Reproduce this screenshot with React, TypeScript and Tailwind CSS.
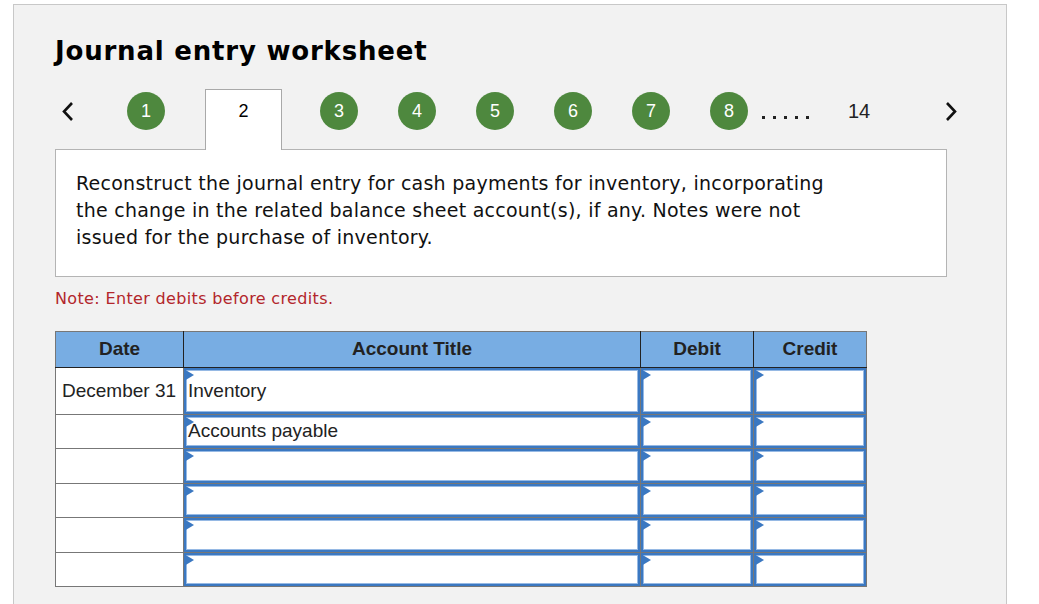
import type { ReactNode } from "react";

const steps = [3, 4, 5, 6, 7, 8];

function Circle({ n, className = "" }: { n: number; className?: string }) {
  return (
    <div
      className={`mt-[3px] flex h-[38px] w-[38px] shrink-0 items-center justify-center rounded-full bg-[#4e883e] text-[18px] leading-none text-white ${className}`}
      style={{ fontFamily: '"Liberation Sans", Arial, sans-serif' }}
    >
      {n}
    </div>
  );
}

function Chevron({ dir }: { dir: "left" | "right" }) {
  return (
    <svg width="13" height="21" viewBox="0 0 13 21" className="shrink-0">
      <path
        d={dir === "left" ? "M11 2 L3 10.5 L11 19" : "M2 2 L10 10.5 L2 19"}
        fill="none"
        stroke="#111"
        strokeWidth="2.6"
      />
    </svg>
  );
}

function InputCell({ children, tall }: { children?: ReactNode; tall?: boolean }) {
  return (
    <td className="border border-[#777] p-0 align-top">
      <div
        className={`relative flex border-2 border-[#3b78c1] bg-white shadow-[inset_0_0_0_1px_#96b9e4] ${
          tall ? "h-[46px] items-center" : "h-[33.4px] items-start pt-[3px]"
        }`}
      >
        <svg width="10" height="12" viewBox="0 0 10 12" className="absolute -left-[2px] -top-[1px]">
          <path d="M0 0 L10 6 L0 12 Z" fill="#3b78c1" />
        </svg>
        <span className="pl-[2px] text-[19px] leading-[22px] text-[#222]">{children}</span>
      </div>
    </td>
  );
}

const rows: { date: string; account: string; tall?: boolean }[] = [
  { date: "December 31", account: "Inventory", tall: true },
  { date: "", account: "Accounts payable" },
  { date: "", account: "" },
  { date: "", account: "" },
  { date: "", account: "" },
  { date: "", account: "" },
];

export default function App() {
  return (
    <div className="h-[604px] overflow-hidden bg-white pl-[13px] pt-[4px]">
      <div
        className="h-[640px] w-[994px] border border-[#c8c8c8] bg-[#f2f2f2] pl-[41px] pt-[29px]"
        style={{ fontFamily: '"DejaVu Sans", Verdana, sans-serif' }}
      >
        <h1 className="text-[26px] font-bold leading-[35px] tracking-[0.8px] text-black">Journal entry worksheet</h1>

        {/* step navigation */}
        <div className="mt-[20px] flex h-[60px] items-start">
          <div className="ml-[6px] mt-[12px]">
            <Chevron dir="left" />
          </div>
          <Circle n={1} className="ml-[53px]" />
          <div
            className="relative z-10 ml-[40px] flex h-[61px] w-[77px] shrink-0 justify-center border border-b-0 border-[#a9a9a9] bg-white pt-[11px] text-[18px] leading-[20px] text-black"
            style={{ fontFamily: '"Liberation Sans", Arial, sans-serif' }}
          >
            2
          </div>
          {steps.map((n, i) => (
            <Circle key={n} n={n} className={i === 0 ? "ml-[38px]" : "ml-[40px]"} />
          ))}
          <div className="ml-[14px] mt-[27px] flex gap-[8px]">
            {[0, 1, 2, 3, 4].map((d) => (
              <span key={d} className="h-[3px] w-[3px] bg-[#222]" />
            ))}
          </div>
          <div
            className="ml-[39px] mt-[11px] text-[20px] leading-[22px] text-[#222]"
            style={{ fontFamily: '"Liberation Sans", Arial, sans-serif' }}
          >
            14
          </div>
          <div className="ml-[75px] mt-[12px]">
            <Chevron dir="right" />
          </div>
        </div>

        {/* question */}
        <div className="w-[892px] border border-[#b4b4b4] bg-white pb-[25px] pl-[20px] pr-[100px] pt-[20px] text-[19px] leading-[27px] tracking-[0.25px] text-[#111]">
          Reconstruct the journal entry for cash payments for inventory, incorporating the change in the related
          balance sheet account(s), if any. Notes were not issued for the purchase of inventory.
        </div>

        <p className="mt-[12px] text-[16px] leading-[20px] tracking-[0.35px] text-[#b3262b]">
          Note: Enter debits before credits.
        </p>

        <table
          className="mt-[22px] w-[811px] table-fixed border-collapse border border-[#777]"
          style={{ fontFamily: '"Liberation Sans", Arial, sans-serif' }}
        >
          <colgroup>
            <col className="w-[128px]" />
            <col className="w-[457px]" />
            <col className="w-[113px]" />
            <col className="w-[113px]" />
          </colgroup>
          <thead>
            <tr className="h-[36px] bg-[#78ade3] text-[19px] font-bold text-[#222]">
              <th className="border-b border-r border-[#222] font-bold">Date</th>
              <th className="border-b border-r border-[#222] font-bold">Account Title</th>
              <th className="border-b border-r border-[#222] font-bold">Debit</th>
              <th className="border-b border-[#222] font-bold">Credit</th>
            </tr>
          </thead>
          <tbody>
            {rows.map((r, i) => (
              <tr key={i} className="bg-white">
                <td className="border border-[#777] px-[6px] text-[19px] leading-[22px] text-[#222]">{r.date}</td>
                <InputCell tall={r.tall}>{r.account}</InputCell>
                <InputCell tall={r.tall} />
                <InputCell tall={r.tall} />
              </tr>
            ))}
          </tbody>
        </table>
      </div>
    </div>
  );
}
